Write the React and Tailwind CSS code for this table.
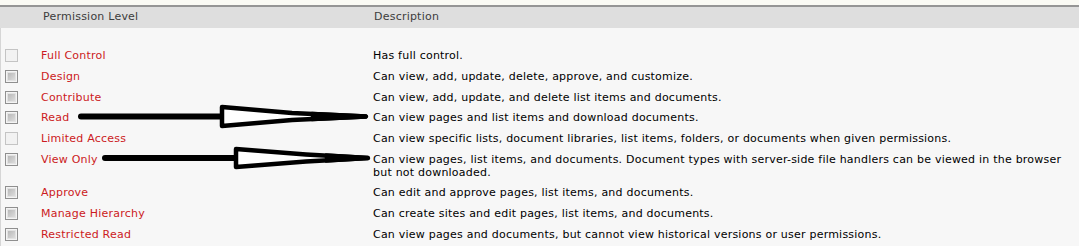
import React from "react";

const rows = [
  { name: "Full Control", desc: "Has full control.", disabled: true },
  { name: "Design", desc: "Can view, add, update, delete, approve, and customize." },
  { name: "Contribute", desc: "Can view, add, update, and delete list items and documents." },
  { name: "Read", desc: "Can view pages and list items and download documents." },
  {
    name: "Limited Access",
    desc: "Can view specific lists, document libraries, list items, folders, or documents when given permissions.",
    disabled: true,
  },
  {
    name: "View Only",
    desc: "Can view pages, list items, and documents. Document types with server-side file handlers can be viewed in the browser but not downloaded.",
  },
  { name: "Approve", desc: "Can edit and approve pages, list items, and documents." },
  { name: "Manage Hierarchy", desc: "Can create sites and edit pages, list items, and documents." },
  {
    name: "Restricted Read",
    desc: "Can view pages and documents, but cannot view historical versions or user permissions.",
  },
];

function Box({ disabled }) {
  if (disabled) {
    return (
      <span className="block w-[13px] h-[13px] border border-[#c4c4c4] bg-[#f2f2f2]" />
    );
  }
  return (
    <span className="flex items-center justify-center w-[13px] h-[13px] border border-[#8f8f8f] bg-[#f4f4f4]">
      <span className="block w-[9px] h-[9px] border border-[#e2e2e2] bg-gradient-to-br from-[#b9b9b9] to-[#dcdcdc]" />
    </span>
  );
}

// hand-drawn style pointer: thick shaft into a hollow, tapering head
function Pointer({ x0, x1, xt, y, h }) {
  const top = y - h / 2;
  const bot = y + h / 2;
  return (
    <g>
      <line x1={x0} y1={y} x2={x1 + 2} y2={y} stroke="#000" strokeWidth="6" strokeLinecap="round" />
      <path
        d={`M ${x1} ${top} L ${x1 + 70} ${y - 3.5} L ${xt} ${y} L ${x1 + 70} ${y + 3.5} L ${x1} ${bot} Z`}
        fill="#fff"
        stroke="#000"
        strokeWidth="4.5"
        strokeLinejoin="round"
      />
      <path
        d={`M ${x1 + 90} ${y - 3.5} L ${xt} ${y - 1} L ${xt} ${y + 1} L ${x1 + 90} ${y + 3.5} Z`}
        fill="#000"
        stroke="#000"
        strokeWidth="2.5"
        strokeLinejoin="round"
      />
    </g>
  );
}

export default function App() {
  return (
    <div
      className="relative w-[1079px] h-[246px] overflow-hidden bg-[#f7f7f7] text-[11px] tracking-[0.22px] text-black"
      style={{ fontFamily: '"DejaVu Sans", Verdana, sans-serif' }}
    >
      <div className="h-[5px] bg-[#fafaf4]" />
      <div className="h-[2px] bg-[#959595]" />
      <div className="grid grid-cols-[372px_1fr] h-[21px] bg-[#dedede] pt-[3px] leading-[13px] text-[#3c3c3c]">
        <div className="pl-[43px]">Permission Level</div>
        <div className="pl-[2px]">Description</div>
      </div>
      <div className="border-l border-[#d6d6d6] pt-[17.5px] h-full">
        {rows.map((r) => (
          <div key={r.name} className="grid grid-cols-[40px_332px_1fr] py-[3.85px] leading-[13px]">
            <div className="pl-[4px]">
              <Box disabled={r.disabled} />
            </div>
            <div className="text-[#cc1a22]">{r.name}</div>
            <div className="pr-[14px]">{r.desc}</div>
          </div>
        ))}
      </div>
      <svg className="absolute left-0 top-0 pointer-events-none" width="1079" height="246">
        <Pointer x0={81} x1={222} xt={366} y={116.5} h={19} />
        <Pointer x0={105} x1={236} xt={368} y={158} h={18} />
      </svg>
    </div>
  );
}
